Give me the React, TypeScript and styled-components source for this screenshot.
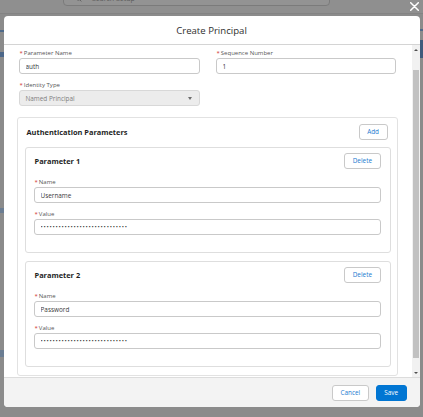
import React from 'react';
import styled, { createGlobalStyle } from 'styled-components';

const Global = createGlobalStyle`
  html, body { margin: 0; padding: 0; background: #8b8b8b; }
  body { font-family: "Open Sans", "Liberation Sans", sans-serif; }
  * { box-sizing: border-box; }
`;

const Page = styled.div`
  width: 423px;
  height: 417px;
  overflow: hidden;
  background: #8b8b8b;
  display: flex;
  flex-direction: column;
`;

const BgHeader = styled.div`
  height: 16px;
  flex: none;
  display: flex;
  align-items: flex-start;
  background: linear-gradient(#8f8f8f 0 13px, #838383 13px 14px, #8b8b8b 14px);
`;

const SearchBox = styled.div`
  margin-left: 63px;
  margin-top: -14px;
  width: 267px;
  height: 20px;
  border: 1px solid #7b7b7b;
  border-radius: 4px;
  background: #939393;
  display: flex;
  align-items: flex-end;
  gap: 10px;
  padding: 0 0 3px 12px;
  font-size: 7px;
  line-height: 7px;
  color: #5a5a5a;
`;

const CloseIcon = styled.svg`
  margin-left: auto;
  margin-right: 4px;
  margin-top: 2px;
  width: 9px;
  height: 9px;
`;

const Main = styled.div`
  display: flex;
  flex: none;
  height: 391px;
`;

const Gutter = styled.div<{ $marks: string }>`
  flex: 1;
  background: ${(p) => p.$marks};
`;

const Modal = styled.div`
  width: 416px;
  flex: none;
  display: flex;
  flex-direction: column;
  background: #fff;
  border-radius: 4px;
  overflow: hidden;
`;

const Header = styled.div`
  height: 29px;
  flex: none;
  border-bottom: 1px solid #d4d4d4;
  display: flex;
  align-items: center;
  justify-content: center;
  font-size: 9.6px;
  color: #2f2f2f;
`;

const Body = styled.div`
  height: 332px;
  flex: none;
  display: flex;
  overflow: hidden;
`;

const Content = styled.div`
  flex: 1;
  padding: 4px 16px 0 15px;
  display: flex;
  flex-direction: column;
`;

const FieldGrid = styled.div`
  display: grid;
  grid-template-columns: 181px 180px;
  column-gap: 16px;
  row-gap: 7px;
`;

const Field = styled.div`
  display: flex;
  flex-direction: column;
  gap: 1px;
`;

const Label = styled.label`
  font-size: 6px;
  line-height: 8px;
  height: 8px;
  color: #555;
  padding-left: 1px;
`;

const Req = styled.span`
  color: #d0312d;
  margin-right: 1px;
`;

const TextInput = styled.input<{ $dots?: boolean }>`
  height: 16px;
  width: 100%;
  border: 1px solid #c9c9c9;
  border-radius: 3px;
  padding: 0 6px;
  font-family: "Open Sans", "Liberation Sans", sans-serif;
  font-size: ${(p) => (p.$dots ? '6px' : '6.4px')};
  letter-spacing: ${(p) => (p.$dots ? '0.75px' : '0')};
  color: #3a3a3a;
  background: #fff;
  outline: none;
  margin: 0;
`;

const SelectBox = styled.div`
  height: 16px;
  border: 1px solid #d8d8d8;
  border-radius: 3px;
  background: #ececec;
  display: flex;
  align-items: center;
  justify-content: space-between;
  padding: 0 7px 0 6px;
  font-size: 6.4px;
  color: #808080;
`;

const Caret = styled.span`
  width: 0;
  height: 0;
  border-left: 2.5px solid transparent;
  border-right: 2.5px solid transparent;
  border-top: 3px solid #6d6d6d;
`;

const Card = styled.div<{ $outer?: boolean }>`
  border: 1px solid ${(p) => (p.$outer ? '#e2e2e2' : '#dedede')};
  border-radius: 3px;
  background: #fff;
  display: flex;
  flex-direction: column;
  margin: ${(p) => (p.$outer ? '11px -2px 0' : '0')};
  padding: ${(p) => (p.$outer ? '6px 6px 8px 7px' : '5px 9px 17px 8px')};
  gap: ${(p) => (p.$outer ? '8px' : '0')};
`;

const CardHead = styled.div<{ $outer?: boolean }>`
  display: flex;
  align-items: center;
  justify-content: space-between;
  height: 16px;
  padding-left: ${(p) => (p.$outer ? '2px' : '1px')};
  padding-right: ${(p) => (p.$outer ? '3px' : '0')};
  margin-bottom: ${(p) => (p.$outer ? '-1px' : '9px')};
  font-size: 7.4px;
  font-weight: 700;
  color: #1e1e1e;
`;

const ParamFields = styled.div`
  display: flex;
  flex-direction: column;
  gap: 7px;
`;

const Button = styled.button<{ $brand?: boolean }>`
  height: 16px;
  padding: 0 7.5px;
  border: 1px solid ${(p) => (p.$brand ? '#0176d3' : '#c9c9c9')};
  border-radius: 3px;
  background: ${(p) => (p.$brand ? '#0176d3' : '#fff')};
  color: ${(p) => (p.$brand ? '#fff' : '#1b7ad0')};
  font-family: "Open Sans", "Liberation Sans", sans-serif;
  font-size: 6.4px;
  font-weight: 400;
  line-height: 14px;
  margin: 0;
  cursor: pointer;
`;

const ScrollTrack = styled.div`
  width: 8px;
  flex: none;
  background: #f1f1f1;
  display: flex;
  flex-direction: column;
  align-items: center;
`;

const Arrow = styled.span<{ $down?: boolean }>`
  width: 0;
  height: 0;
  border-left: 2px solid transparent;
  border-right: 2px solid transparent;
  ${(p) =>
    p.$down
      ? 'border-top: 2px solid #505050; margin-top: auto; margin-bottom: 3px;'
      : 'border-bottom: 2px solid #505050; margin-top: 4px;'}
`;

const Thumb = styled.div`
  width: 6px;
  height: 288px;
  margin-top: 19px;
  background: #c1c1c1;
`;

const Footer = styled.div`
  height: 30px;
  flex: none;
  border-top: 1px solid #dcdcdc;
  background: #f3f3f3;
  display: flex;
  align-items: center;
  justify-content: flex-end;
  gap: 7px;
  padding-right: 13px;
`;

const dots = '•'.repeat(29);

const leftMarks = `linear-gradient(to bottom,
  transparent 0 14px, #4f6a8a 14px 16px, transparent 16px 36px,
  #4c6789 36px 41px, transparent 41px 192px, #6b7d92 192px 197px,
  transparent 197px 334px, #6b7d92 334px 341px, transparent 341px)`;
const rightMarks = `linear-gradient(to bottom,
  transparent 0 13px, #4f6a8a 13px 15px, transparent 15px 24px,
  #3f5a7c 24px 42px, transparent 42px)`;

function Param({ n, name }: { n: number; name: string }) {
  return (
    <Card>
      <CardHead>
        <span>Parameter {n}</span>
        <Button type="button">Delete</Button>
      </CardHead>
      <ParamFields>
        <Field>
          <Label><Req>*</Req>Name</Label>
          <TextInput readOnly value={name} />
        </Field>
        <Field>
          <Label><Req>*</Req>Value</Label>
          <TextInput readOnly $dots value={dots} />
        </Field>
      </ParamFields>
    </Card>
  );
}

export default function App() {
  return (
    <>
      <Global />
      <Page>
        <BgHeader>
          <SearchBox>
            <svg width="6" height="6" viewBox="0 0 10 10">
              <circle cx="4" cy="4" r="3" fill="none" stroke="#5a5a5a" strokeWidth="1.4" />
              <line x1="6.3" y1="6.3" x2="9" y2="9" stroke="#5a5a5a" strokeWidth="1.4" />
            </svg>
            <span>Search Setup</span>
          </SearchBox>
          <CloseIcon viewBox="0 0 9 9">
            <path d="M0.7 0.7 L8.3 8.3 M8.3 0.7 L0.7 8.3" stroke="#fff" strokeWidth="1.5" strokeLinecap="round" />
          </CloseIcon>
        </BgHeader>
        <Main>
          <Gutter $marks={leftMarks} />
          <Modal>
            <Header>Create Principal</Header>
            <Body>
              <Content>
                <FieldGrid>
                  <Field>
                    <Label><Req>*</Req>Parameter Name</Label>
                    <TextInput readOnly value="auth" />
                  </Field>
                  <Field>
                    <Label><Req>*</Req>Sequence Number</Label>
                    <TextInput readOnly value="1" />
                  </Field>
                  <Field>
                    <Label><Req>*</Req>Identity Type</Label>
                    <SelectBox>
                      <span>Named Principal</span>
                      <Caret />
                    </SelectBox>
                  </Field>
                </FieldGrid>
                <Card $outer>
                  <CardHead $outer>
                    <span>Authentication Parameters</span>
                    <Button type="button">Add</Button>
                  </CardHead>
                  <Param n={1} name="Username" />
                  <Param n={2} name="Password" />
                </Card>
              </Content>
              <ScrollTrack>
                <Arrow />
                <Thumb />
                <Arrow $down />
              </ScrollTrack>
            </Body>
            <Footer>
              <Button type="button">Cancel</Button>
              <Button type="button" $brand>Save</Button>
            </Footer>
          </Modal>
          <Gutter $marks={rightMarks} />
        </Main>
      </Page>
    </>
  );
}
